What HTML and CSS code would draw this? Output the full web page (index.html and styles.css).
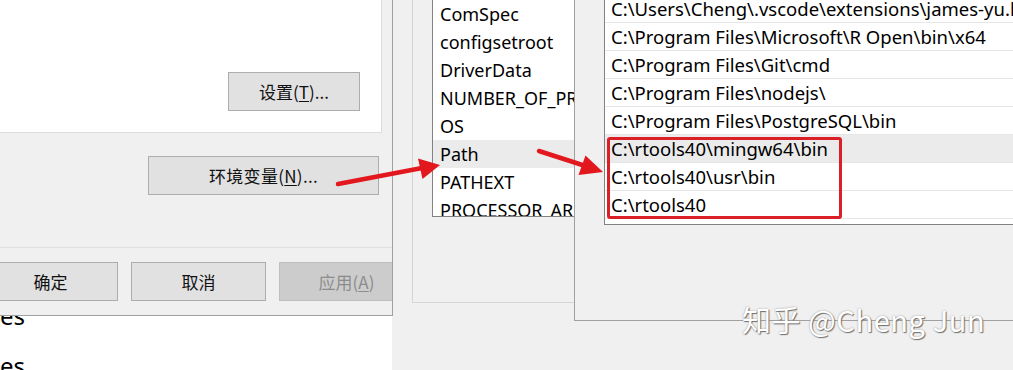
FILE: index.html
```html
<!DOCTYPE html>
<html lang="zh-CN">
<head>
    <meta charset="UTF-8">
    <meta name="viewport" content="width=device-width, initial-scale=1.0">
    <title>环境变量</title>
    <link rel="stylesheet" href="styles.css">
</head>
<body>
    <div class="desk">
        <div class="window back">
            <p>es</p>
            <p>es</p>
        </div>

        <div class="window sysprops">
            <div class="perf-box">
                <button class="btn btn-settings">设置(<u>T</u>)...</button>
            </div>
            <div class="env-row">
                <button class="btn btn-env">环境变量(<u>N</u>)...</button>
            </div>
            <div class="footer">
                <button class="btn">确定</button>
                <button class="btn">取消</button>
                <button class="btn" disabled>应用(<u>A</u>)</button>
            </div>
        </div>

        <div class="window envvars">
            <div class="group">
                <ul class="list vars">
                    <li>ComSpec</li>
                    <li>configsetroot</li>
                    <li>DriverData</li>
                    <li>NUMBER_OF_PROCESSORS</li>
                    <li>OS</li>
                    <li class="selected">Path</li>
                    <li>PATHEXT</li>
                    <li>PROCESSOR_ARCHITECTURE</li>
                </ul>
            </div>
        </div>

        <div class="window editvar">
            <ul class="list paths">
                <li>C:\Users\Cheng\.vscode\extensions\james-yu.latex-workshop</li>
                <li>C:\Program Files\Microsoft\R Open\bin\x64</li>
                <li>C:\Program Files\Git\cmd</li>
                <li>C:\Program Files\nodejs\</li>
                <li>C:\Program Files\PostgreSQL\bin</li>
                <li class="selected">C:\rtools40\mingw64\bin</li>
                <li>C:\rtools40\usr\bin</li>
                <li>C:\rtools40</li>
            </ul>
        </div>

        <div class="highlight"></div>

        <svg class="arrows" width="1013" height="370" viewBox="0 0 1013 370">
            <line x1="338" y1="184" x2="422" y2="168" />
            <polygon points="440,165 418,158.5 422.5,179" />
            <line x1="539" y1="151" x2="584" y2="165.5" />
            <polygon points="603,172 585.5,155.5 578.5,175" />
        </svg>

        <div class="watermark">知乎 @Cheng Jun</div>
    </div>
</body>
</html>
```

FILE: styles.css
```css
body{
    margin: 0;
    background-color: #f0f0f0;
    font-family: "Noto Sans", "Noto Sans CJK SC", sans-serif;
    color: #000;
}
.desk{
    position: relative;
    width: 1013px;
    height: 370px;
    overflow: hidden;
}
.window{
    position: absolute;
    overflow: hidden;
    background-color: #f0f0f0;
}

/* window behind the system properties dialog */
.back{
    left: 0;
    top: 291px;
    width: 392px;
    height: 79px;
    background-color: #fff;
    font-size: 24px;
    line-height: 50px;
}
.back p{
    margin: 0;
}

/* system properties */
.sysprops{
    left: 0;
    top: 0;
    width: 392px;
    height: 315px;
    border-right: 1px solid #a0a0a0;
    border-bottom: 1px solid #a0a0a0;
    display: flex;
    flex-direction: column;
}
.perf-box{
    box-sizing: border-box;
    width: 382px;
    height: 133px;
    flex-shrink: 0;
    background-color: #fff;
    border-right: 1px solid #dcdcdc;
    border-bottom: 1px solid #dcdcdc;
    display: flex;
    justify-content: flex-end;
    align-items: flex-end;
    padding: 0 21px 21px 0;
}
.env-row{
    display: flex;
    justify-content: flex-end;
    padding-right: 13px;
    margin-top: 23px;
}
.footer{
    display: flex;
    gap: 13px;
    margin-top: 52px;
    margin-left: -17px;
    padding-top: 14px;
    border-top: 1px solid #dfdfdf;
}
.btn{
    box-sizing: border-box;
    flex-shrink: 0;
    height: 39px;
    width: 135px;
    padding: 0;
    background-color: #e1e1e1;
    border: 1px solid #adadad;
    font-family: "Noto Sans CJK SC", sans-serif;
    font-size: 17px;
    color: #111;
}
.btn u{
    text-underline-offset: 2px;
}
.btn:disabled{
    background-color: #cccccc;
    border-color: #bfbfbf;
    color: #8c8c8c;
}
.btn-settings{
    width: 132px;
}
.btn-env{
    width: 231px;
    letter-spacing: 0.3px;
}

/* environment variables dialog */
.envvars{
    left: 393px;
    top: 0;
    width: 620px;
    height: 370px;
}
.group{
    margin-left: 19px;
    height: 302px;
    padding-left: 19px;
    border-left: 1px solid #d5d5d5;
    border-bottom: 1px solid #d5d5d5;
}
.list{
    margin: 0;
    padding: 0;
    list-style: none;
    background-color: #fff;
    overflow: hidden;
    font-size: 18px;
    white-space: nowrap;
}
.vars{
    width: 300px;
    height: 216px;
    border: 1px solid #828282;
    border-top: none;
}
.vars li{
    height: 28px;
    line-height: 28px;
    padding-left: 7px;
}
.list li.selected{
    background-color: #ebebeb;
}

/* edit environment variable dialog */
.editvar{
    left: 574px;
    top: 0;
    width: 410px;
    height: 320px;
    padding-left: 29px;
    border-left: 1px solid #a0a0a0;
    border-bottom: 1px solid #a0a0a0;
}
.paths{
    margin-top: -5px;
    width: 500px;
    height: 229px;
    border-left: 1px solid #828282;
    border-bottom: 1px solid #828282;
    font-size: 18.5px;
}
.paths li{
    box-sizing: border-box;
    height: 28px;
    line-height: 27px;
    padding-left: 6px;
    border-bottom: 1px solid #e6e6e6;
}

.highlight{
    position: absolute;
    left: 607px;
    top: 137px;
    width: 235px;
    height: 82px;
    box-sizing: border-box;
    border: 3px solid #dc1f26;
    border-radius: 3px;
}
.arrows{
    position: absolute;
    left: 0;
    top: 0;
    pointer-events: none;
}
.arrows line{
    stroke: #e3171e;
    stroke-width: 4.5;
    stroke-linecap: round;
}
.arrows polygon{
    fill: #e3171e;
}
.watermark{
    position: absolute;
    left: 742px;
    top: 298px;
    font-family: "Noto Sans CJK SC", sans-serif;
    font-size: 29px;
    letter-spacing: 0.6px;
    color: #fff;
    text-shadow: 1px 1px 1px #6f6f6f, 0 0 2px #9a9a9a;
    white-space: nowrap;
}
```
